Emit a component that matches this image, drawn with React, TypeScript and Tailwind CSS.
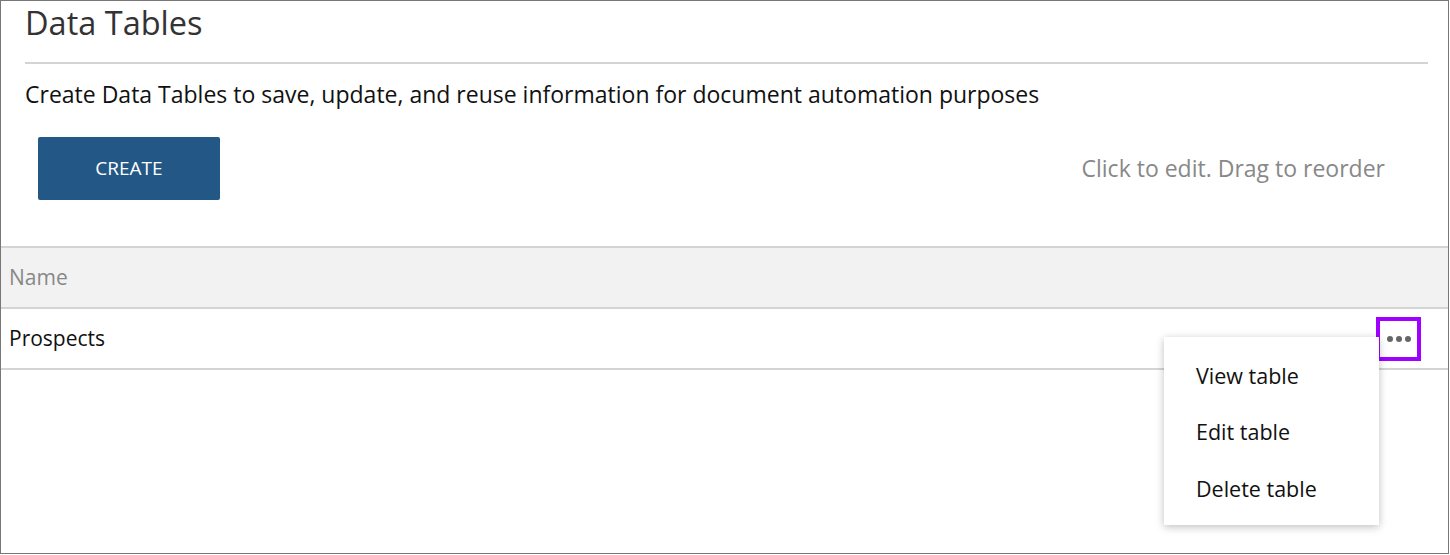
const font = { fontFamily: '"Open Sans", "Noto Sans", sans-serif' };

function MenuItem({ label }: { label: string }) {
  return (
    <div className="flex h-[56.5px] items-center pl-8 text-[21.5px] text-[#111]">
      {label}
    </div>
  );
}

export default function App() {
  return (
    <div
      className="h-[554px] w-[1449px] border border-[#777] bg-white"
      style={font}
    >
      <div className="pl-[24px] pr-[20px]">
        <h1 className="text-[32.5px] leading-[44px] text-[#333]">Data Tables</h1>
        <div className="mt-[17px] h-[2px] bg-[#d4d4d4]" />
        <p className="mt-[15px] text-[23px] leading-[30px] text-[#111]">
          Create Data Tables to save, update, and reuse information for document
          automation purposes
        </p>
      </div>

      <div className="mt-[28px] flex items-center justify-between pl-[37px] pr-[63px]">
        <button className="h-[63px] w-[182px] rounded-[2px] bg-[#235785] text-[19px] text-white">
          CREATE
        </button>
        <span className="text-[23px] text-[#888]">
          Click to edit. Drag to reorder
        </span>
      </div>

      <div className="mt-[46px] border-t-2 border-[#d4d4d4]">
        <div className="flex h-[61px] items-center border-b-2 border-[#d4d4d4] bg-[#f2f2f2] pl-[8px] text-[21px] text-[#888]">
          Name
        </div>
        <div className="flex h-[61px] items-center justify-between border-b-2 border-[#d4d4d4] pl-[8px] pr-[27px]">
          <span className="text-[21px] text-[#111]">Prospects</span>
          <div className="relative">
            <div className="flex h-[44px] w-[45px] items-center justify-center gap-[3px] border-4 border-[#a000ff]">
              <span className="h-[6px] w-[6px] rounded-full bg-[#666]" />
              <span className="h-[6px] w-[6px] rounded-full bg-[#666]" />
              <span className="h-[6px] w-[6px] rounded-full bg-[#666]" />
            </div>
            <div className="absolute right-[42px] top-[20px] z-10 w-[215px] bg-white pb-[8px] pt-[11px] shadow-[0_2px_8px_rgba(0,0,0,0.25)]">
              <MenuItem label="View table" />
              <MenuItem label="Edit table" />
              <MenuItem label="Delete table" />
            </div>
          </div>
        </div>
      </div>
    </div>
  );
}
